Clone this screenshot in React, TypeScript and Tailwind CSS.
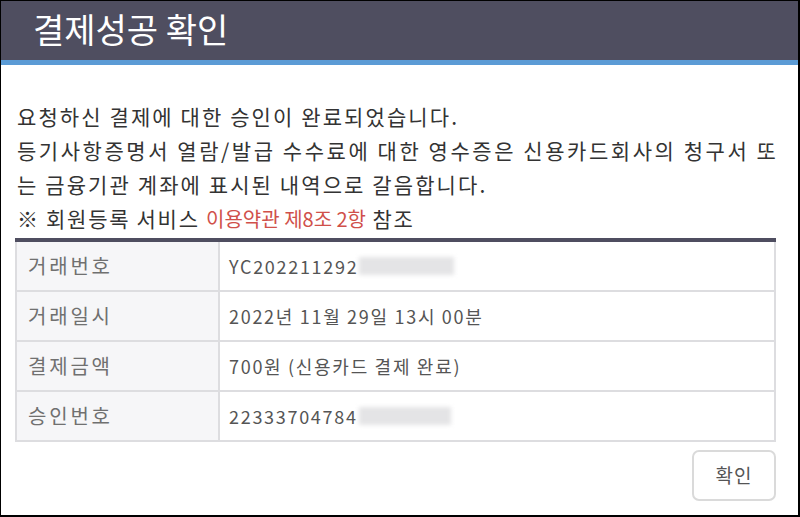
const font = { fontFamily: '"Noto Sans CJK KR", "Liberation Sans", sans-serif' };

const rows = [
  { label: '거래번호', value: 'YC202211292', blur: 'w-[95px]' },
  { label: '거래일시', value: '2022년 11월 29일 13시 00분' },
  { label: '결제금액', value: '700원 (신용카드 결제 완료)' },
  { label: '승인번호', value: '22333704784', blur: 'w-[92px]' },
];

export default function App() {
  return (
    <div
      className="w-[800px] h-[517px] bg-white border-black border-t border-l border-r-2 border-b-2 flex flex-col overflow-hidden"
      style={font}
    >
      {/* title bar */}
      <div className="h-[59px] bg-[#4f4e60] flex items-center pl-[32px] pb-[3px]">
        <h1 className="text-[34px] text-white leading-none">결제성공 확인</h1>
      </div>
      <div className="h-[5px] bg-[#5b9bd5]" />

      <div className="flex flex-col px-[14px] pt-[34px]">
        <div className="pl-[2px] text-[21px] leading-[34px] text-[#333] whitespace-nowrap">
          <p className="tracking-[2.1px]">요청하신 결제에 대한 승인이 완료되었습니다.</p>
          <p className="tracking-[2.55px]">등기사항증명서 열람/발급 수수료에 대한 영수증은 신용카드회사의 청구서 또</p>
          <p className="tracking-[2.1px]">는 금융기관 계좌에 표시된 내역으로 갈음합니다.</p>
          <p className="tracking-[1.7px]">
            ※ 회원등록 서비스{' '}
            <span className="text-[20px] tracking-normal text-[#d0504a]">이용약관 제8조 2항</span> 참조
          </p>
        </div>

        {/* info table */}
        <div className="mt-[2px] w-[761px] border-t-4 border-[#4f4e60]">
          <div className="border-l-2 border-r-2 border-[#dddde0]">
            {rows.map((r) => (
              <div key={r.label} className="flex h-[50px] border-b-2 border-[#dddde0]">
                <div className="w-[203px] bg-[#f6f6f8] border-r-2 border-[#dddde0] flex items-center pl-[11px] text-[20px] tracking-[2.8px] text-[#707070]">
                  {r.label}
                </div>
                <div className="flex-1 flex items-center pl-[9px] text-[18px] tracking-[1.7px] text-[#555]">
                  <span>{r.value}</span>
                  {r.blur && (
                    <span className={`${r.blur} h-[18px] bg-[#e4e4e6] blur-[2px] ml-[1px]`} />
                  )}
                </div>
              </div>
            ))}
          </div>
        </div>

        <div className="flex justify-end w-[761px] mt-[8px]">
          <button className="w-[84px] h-[51px] rounded-[7px] border-2 border-[#dadada] bg-white text-[19px] tracking-[1px] text-[#555]">
            확인
          </button>
        </div>
      </div>
    </div>
  );
}
